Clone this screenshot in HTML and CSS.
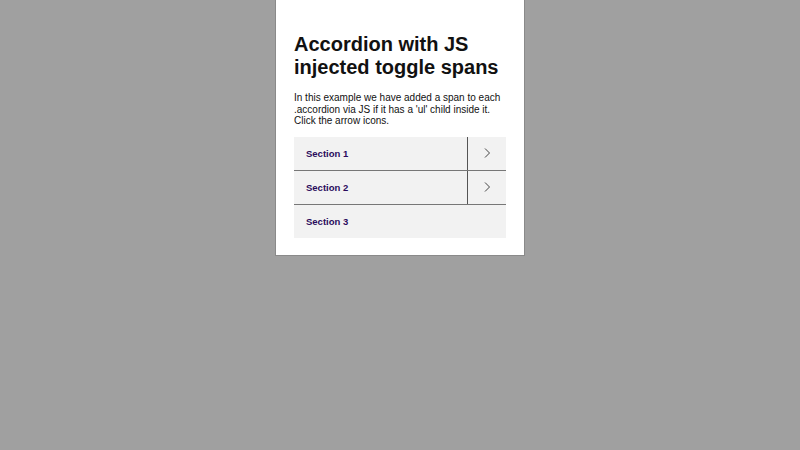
FILE: index.html
```html
<!DOCTYPE html>
<html lang="en">
<head>
    <meta charset="UTF-8">
    <meta name="viewport" content="width=device-width, initial-scale=1.0">
    <title>Accordion with JS injected toggle spans</title>
    <link rel="stylesheet" href="styles.css">
</head>
<body>
    <div class="container">
        <h1>Accordion with JS injected toggle spans</h1>
        <p>In this example we have added a span to each .accordion via JS if it has a 'ul' child inside it. Click the arrow icons.</p>

        <ul class="accordion">
            <li>
                <a href="#">Section 1</a>
                <ul>
                    <li><a href="#">Item one</a></li>
                    <li><a href="#">Item two</a></li>
                </ul>
            </li>
            <li>
                <a href="#">Section 2</a>
                <ul>
                    <li><a href="#">Item one</a></li>
                    <li><a href="#">Item two</a></li>
                </ul>
            </li>
            <li>
                <a href="#">Section 3</a>
            </li>
        </ul>
    </div>

    <script>
        // Add a toggle span to every item that has a sub list
        document.querySelectorAll('.accordion > li').forEach(item => {
            const sub = item.querySelector('ul');
            if (!sub) return;
            const toggle = document.createElement('span');
            toggle.className = 'toggle';
            toggle.innerHTML = '<svg width="10" height="12" viewBox="0 0 10 12"><path d="M3 1.5 L7.5 6 L3 10.5" fill="none" stroke="#444" stroke-width="1"/></svg>';
            item.insertBefore(toggle, sub);
            toggle.addEventListener('click', () => item.classList.toggle('open'));
        });
    </script>
</body>
</html>
```

FILE: styles.css
```css
body {
    margin: 0;
    background: #a0a0a0;
    font-family: "Liberation Sans", Arial, sans-serif;
}
.container {
    width: 212px;
    margin: 0 auto;
    padding: 33px 18px 17px;
    background: white;
    border: 1px solid #8a8a8a;
    border-top: none;
}
h1 {
    font-size: 20px;
    line-height: 23px;
    margin: 0 0 13px;
    color: #111;
}
p {
    font-size: 10px;
    line-height: 11.5px;
    margin: 0 0 10px;
    color: #111;
}
.accordion {
    list-style: none;
    margin: 0;
    padding: 0;
    background: #f2f2f2;
}
.accordion > li {
    display: flex;
    flex-wrap: wrap;
    border-bottom: 1px solid #777;
}
.accordion > li:last-child { border-bottom: none; }
.accordion > li > a {
    flex: 1;
    padding: 0 12px;
    height: 33px;
    line-height: 33px;
    font-size: 9.5px;
    font-weight: bold;
    color: #2a0b5c;
    text-decoration: none;
}
.toggle {
    width: 38px;
    border-left: 1px solid #555;
    display: flex;
    align-items: center;
    justify-content: center;
    cursor: pointer;
}
.accordion ul {
    display: none;
    width: 100%;
    list-style: none;
    margin: 0;
    padding: 0;
}
.accordion li.open ul { display: block; }
.accordion ul a {
    display: block;
    padding: 8px 20px;
    font-size: 9.5px;
    color: #2a0b5c;
}
```
